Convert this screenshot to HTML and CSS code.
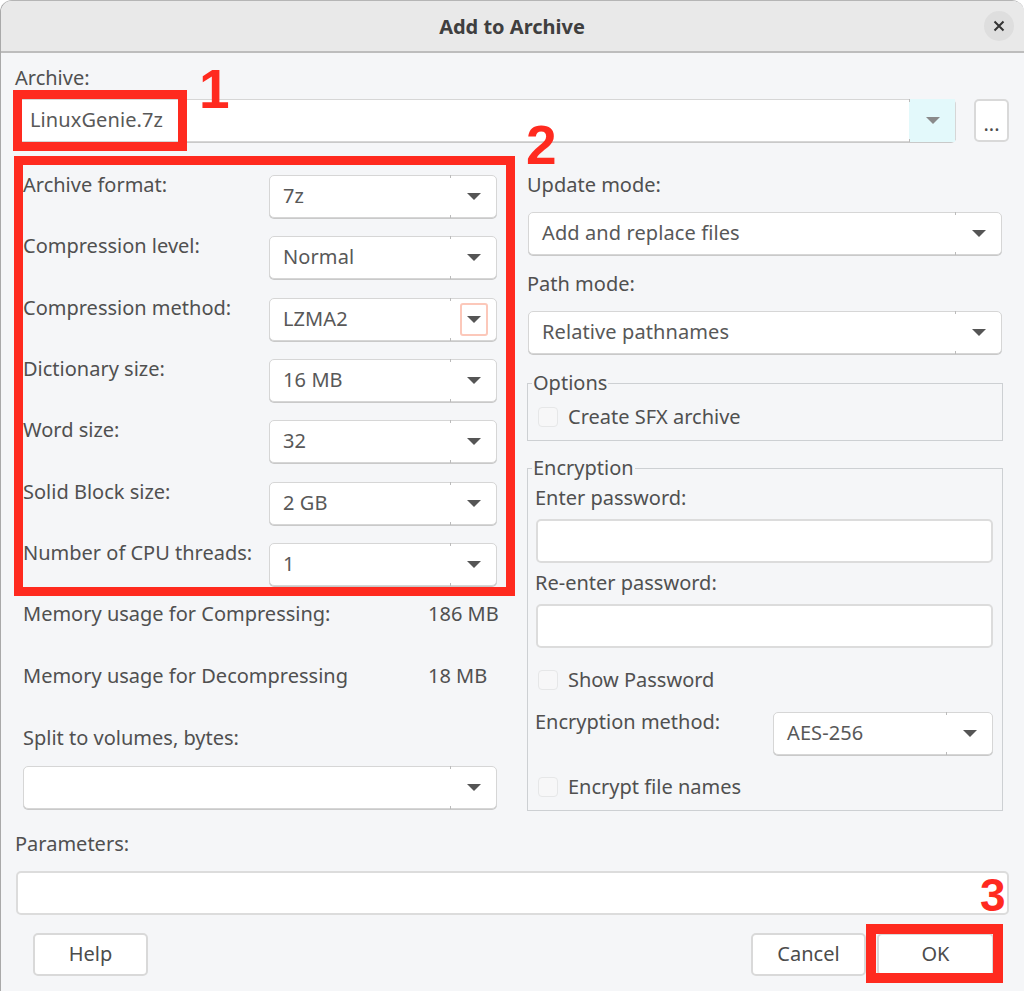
FILE: index.html
```html
<!DOCTYPE html>
<html lang="en">
<head>
<meta charset="utf-8">
<title>Add to Archive</title>
<link rel="stylesheet" href="styles.css">
</head>
<body>
<div class="window">
  <header class="titlebar">
    <h1 class="title">Add to Archive</h1>
    <button class="close" aria-label="Close"><svg width="12" height="12" viewBox="0 0 12 12"><path d="M1.5 1.5l9 9M10.5 1.5l-9 9" stroke="#333" stroke-width="2" fill="none"/></svg></button>
  </header>
  <main class="content">
    <div class="label archive-label">Archive:</div>
    <div class="archive-row">
      <div class="combo grow"><span class="combo-text archive-text">LinuxGenie.7z</span><span class="arrow-cell tinted"><i class="arrow soft"></i></span></div>
      <button class="btn dots">...</button>
    </div>
    <div class="columns">
      <section class="col-left">
        <div class="rows">
          <div class="row"><span class="label">Archive format:</span><div class="combo small"><span class="combo-text">7z</span><span class="arrow-cell"><i class="arrow"></i></span></div></div>
          <div class="row"><span class="label">Compression level:</span><div class="combo small"><span class="combo-text">Normal</span><span class="arrow-cell"><i class="arrow"></i></span></div></div>
          <div class="row"><span class="label">Compression method:</span><div class="combo small"><span class="combo-text">LZMA2</span><span class="arrow-cell"><span class="focus"><i class="arrow"></i></span></span></div></div>
          <div class="row"><span class="label">Dictionary size:</span><div class="combo small"><span class="combo-text">16 MB</span><span class="arrow-cell"><i class="arrow"></i></span></div></div>
          <div class="row"><span class="label">Word size:</span><div class="combo small"><span class="combo-text">32</span><span class="arrow-cell"><i class="arrow"></i></span></div></div>
          <div class="row"><span class="label">Solid Block size:</span><div class="combo small"><span class="combo-text">2 GB</span><span class="arrow-cell"><i class="arrow"></i></span></div></div>
          <div class="row"><span class="label">Number of CPU threads:</span><div class="combo small"><span class="combo-text">1</span><span class="arrow-cell"><i class="arrow"></i></span></div></div>
          <div class="row"><span class="label">Memory usage for Compressing:</span><span class="label value">186 MB</span></div>
          <div class="row"><span class="label">Memory usage for Decompressing</span><span class="label value">18 MB</span></div>
        </div>
        <div class="label split-label">Split to volumes, bytes:</div>
        <div class="combo split"><span class="combo-text"></span><span class="arrow-cell"><i class="arrow"></i></span></div>
      </section>
      <section class="col-right">
        <div class="label">Update mode:</div>
        <div class="combo under-label"><span class="combo-text">Add and replace files</span><span class="arrow-cell"><i class="arrow"></i></span></div>
        <div class="label path-label">Path mode:</div>
        <div class="combo under-label"><span class="combo-text">Relative pathnames</span><span class="arrow-cell"><i class="arrow"></i></span></div>
        <fieldset class="group options">
          <legend class="label legend">Options</legend>
          <div class="options-body">
            <label class="check"><span class="box"></span><span class="label">Create SFX archive</span></label>
          </div>
        </fieldset>
        <fieldset class="group encryption">
          <legend class="label legend">Encryption</legend>
          <div class="enc-body">
            <div class="label enc-label">Enter password:</div>
            <div class="input enc-input"></div>
            <div class="label enc-label reenter">Re-enter password:</div>
            <div class="input enc-input"></div>
            <label class="check show-pass"><span class="box"></span><span class="label">Show Password</span></label>
            <div class="method-row">
              <span class="label enc-label">Encryption method:</span>
              <div class="combo method"><span class="combo-text">AES-256</span><span class="arrow-cell"><i class="arrow"></i></span></div>
            </div>
            <label class="check encrypt-names"><span class="box"></span><span class="label">Encrypt file names</span></label>
          </div>
        </fieldset>
      </section>
    </div>
    <div class="label params-label">Parameters:</div>
    <div class="input params"></div>
    <div class="actions">
      <button class="btn action">Help</button>
      <span class="spacer"></span>
      <button class="btn action">Cancel</button>
      <button class="btn action ok">OK</button>
    </div>
  </main>
  <div class="mark box-one"></div>
  <div class="mark box-two"></div>
  <div class="mark box-three"></div>
  <span class="num num-one">1</span>
  <span class="num num-two">2</span>
  <span class="num num-three">3</span>
</div>
</body>
</html>
```

FILE: styles.css
```css
* { box-sizing: border-box; }
html, body { margin: 0; padding: 0; background: #fff; }
body { width: 1024px; height: 991px; overflow: hidden; font-family: "Noto Sans", "Open Sans", sans-serif; color: #4c4c4c; }

.window { position: relative; width: 1024px; height: 991px; background: #f5f6f8; border-radius: 12px 12px 0 0; border-left: 1px solid #a9a9a9; border-top: 1px solid #b5b5b5; overflow: hidden; margin-top: 0; }
.titlebar { position: relative; height: 52px; margin-left: -1px; background: #e9e9e9; border-bottom: 2px solid #bdbdbd; display: flex; align-items: center; justify-content: center; }
.title { margin: 1px 0 0; font-size: 20px; line-height: 24px; font-weight: 700; color: #3f3f3f; }
.close { position: absolute; right: 10px; top: 10px; width: 30px; height: 30px; padding: 0; border: 0; border-radius: 50%; background: #dedede; display: flex; align-items: center; justify-content: center; }

.content { padding: 15px 15px 0 14px; }
.label { font-size: 20px; line-height: 20px; color: #505050; white-space: nowrap; }

.combo { display: flex; height: 43px; background: #fff; border: 1px solid #d6d6d6; border-radius: 5px; box-shadow: 0 1px 0 #c9c9c9; }
.combo-text { flex: 1; padding-left: 13px; font-size: 20px; line-height: 39px; letter-spacing: 0.1px; color: #585858; }
.arrow-cell { position: relative; width: 46px; flex: none; display: flex; align-items: center; justify-content: center; border-left: 1px solid transparent; border-image: linear-gradient(#bbb 0 4px, transparent 4px calc(100% - 4px), #bbb calc(100% - 4px)) 1; margin: -1px 0; }
.arrow { display: block; width: 0; height: 0; border-left: 7px solid transparent; border-right: 7px solid transparent; border-top: 7px solid #555; }
.arrow.soft { border-top-color: #8a8a8a; }
.tinted { background: #e3f9fb; }
.focus { width: 28px; height: 33px; display: flex; align-items: center; justify-content: center; border: 2px solid #fcc8ba; border-radius: 3px; margin-left: 1px; }

.archive-row { display: flex; gap: 18px; margin-top: 11px; padding-left: 1px; }
.grow { flex: 1; }
.btn { background: #fff; border: 2px solid #d9d9d9; border-radius: 5px; font-family: inherit; font-size: 20px; color: #4c4c4c; padding: 0 0 2px; }
.dots { width: 35px; height: 43px; line-height: 39px; padding: 3px 0 0; }

.columns { display: flex; gap: 30px; margin-top: 33px; padding-left: 8px; height: 635px; align-items: flex-start; }
.col-left { width: 474px; flex: none; }
.col-right { width: 476px; flex: none; }
.rows { display: grid; grid-auto-rows: 61.33px; }
.row { display: flex; justify-content: space-between; align-items: flex-start; }
.small { width: 228px; flex: none; }
.value { width: 69px; flex: none; }
.split-label { margin-top: 1px; }
.split { margin-top: 18px; }

.under-label { margin-top: 17px; margin-left: 1px; width: 474px; }
.path-label { margin-top: 19px; }
.group { margin: 0; padding: 0; min-width: 0; border: 1px solid #cdd0d3; }
.legend { margin-left: 4px; padding: 0 1px; }
.options { margin-top: 19px; }
.options-body { padding: 14px 10px 13px 8px; }
.encryption { margin-top: 17px; }
.enc-body { padding: 10px 9px 13px 8px; }
.enc-label { margin-left: -1px; }
.check { display: flex; align-items: center; gap: 10px; }
.box { display: block; width: 20px; height: 20px; flex: none; background: #f7f7f8; border: 1px solid #e6e7e8; border-radius: 4px; margin-left: 2px; }
.input { height: 44px; background: #fff; border: 2px solid #dcdcdc; border-radius: 5px; }
.enc-input { margin-top: 11px; }
.reenter { margin-top: 10px; }
.show-pass { margin-top: 22px; }
.method-row { display: flex; justify-content: space-between; margin-top: 22px; }
.method { width: 220px; flex: none; }
.encrypt-names { margin-top: 22px; }
.params-label { margin-top: 24px; }
.params { margin-top: 17px; margin-left: 1px; }
.actions { display: flex; gap: 11px; margin-top: 18px; padding: 0 15px 0 18px; }
.spacer { flex: 1; }
.action { width: 115px; height: 43px; }
.ok { width: 117px; }

.mark { position: absolute; border: 9px solid #ff2a1f; }
.box-one { left: 12px; top: 89px; width: 174px; height: 61px; }
.box-two { left: 13px; top: 155px; width: 501px; height: 440px; }
.box-three { left: 865px; top: 923px; width: 137px; height: 59px; border-width: 10px; }
.num { position: absolute; font-family: "Liberation Sans", Arial, sans-serif; font-weight: 700; color: #ff2a1f; line-height: 1; }
.num-one { left: 198px; top: 61px; font-size: 55px; }
.num-two { left: 525px; top: 117px; font-size: 55px; }
.num-three { left: 979px; top: 871px; font-size: 46px; }
```
